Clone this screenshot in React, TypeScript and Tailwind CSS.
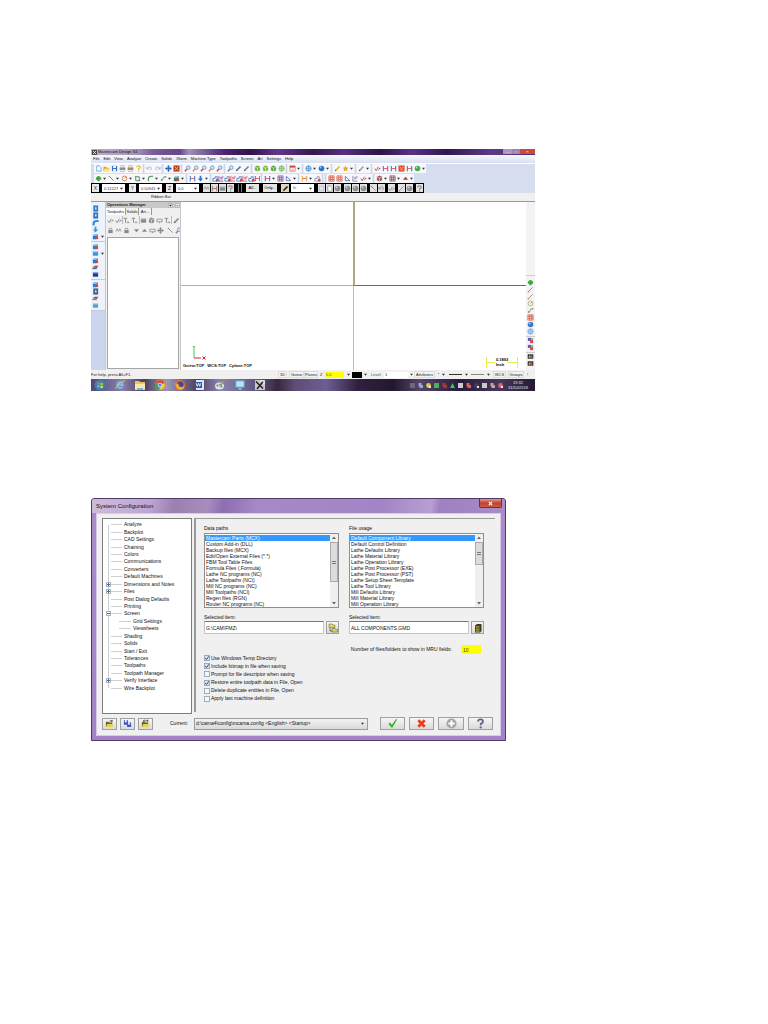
import React, { useState } from "react";

const shapes: Record<string, (c: string) => React.ReactNode> = {
  page: (c) => <path d="M2 1h3l2 2v4H2z" fill="#fff" stroke={c} strokeWidth=".9" />,
  folder: (c) => (<><path d="M.5 2h3l1 1H7v4H.5z" fill={c} /><path d="M2 4h6L6.5 7H.5z" fill="#ffe27a" /></>),
  disk: (c) => (<><path d="M1 1h6v6H1z" fill={c} /><path d="M2.3 1h3.4v2.3H2.3zM2.3 4.7h3.4V7H2.3z" fill="#e8f0ff" /></>),
  printer: (c) => (<><path d="M2 .8h4V3H2zM2 5h4v2.4H2z" fill="#fff" stroke={c} strokeWidth=".6" /><path d="M.7 3h6.6v2.6H.7z" fill={c} /></>),
  help: (c) => (<><path d="M2 2.6Q2 1 4 1t2 1.5Q6 3.700 4.200 4.200V5.400" fill="none" stroke={c} strokeWidth="1.400" /><circle cx="4.200" cy="6.900" r=".8" fill={c} /></>),
  undo: (c) => <path d="M1 2v2.500h2.500M1.200 4Q4 .5 6 3q1 2-1.500 3" fill="none" stroke={c} strokeWidth=".9" />,
  redo: (c) => <path d="M7 2v2.500H4.500M6.800 4Q4 .5 2 3q-1 2 1.500 3" fill="none" stroke={c} strokeWidth=".9" />,
  move: (c) => <path d="M4 0l1.600 2H4.800v1.200H6V2.400L8 4 6 5.600V4.800H4.800V6h.8L4 8 2.400 6h.8V4.800H2v.8L0 4l2-1.600v.8h1.200V2h-.8z" fill={c} />,
  fit: (c) => (<><path d="M.5.500h7v7h-7z" fill={c} /><path d="M2 2l4 4M6 2L2 6" stroke="#ffc04d" strokeWidth="1" /></>),
  mag: (c) => (<><path d="M3.400 4.600L1 7.200" stroke={c} strokeWidth="1.700" /><circle cx="4.900" cy="3" r="2.100" fill="#cfe5fa" stroke="#5c87bd" strokeWidth=".8" /></>),
  cube: (c) => (<><path d="M4 .6l3 1.500v3.800L4 7.500 1 5.900V2.100z" fill={c} /><path d="M1.300 2.300L4 3.600l2.700-1.300M4 3.600v3.600" stroke="#fff" strokeWidth=".6" fill="none" /></>),
  calendar: (c) => (<><path d="M1 1h6v6H1z" fill="#fff" stroke={c} strokeWidth=".7" /><path d="M1 1h6v2H1z" fill={c} /><path d="M2.500 4.500h3M2.500 5.700h3" stroke="#888" strokeWidth=".5" /></>),
  globe: (c) => (<><circle cx="4" cy="4" r="3" fill="#d8edfb" stroke={c} strokeWidth=".9" /><path d="M1 4h6M4 1v6M4 1q-3 3 0 6q3-3 0-6" stroke={c} strokeWidth=".5" fill="none" /></>),
  sphere: (c) => (<><circle cx="4" cy="4" r="3.200" fill={c} /><circle cx="3" cy="2.800" r="1" fill="#fff" opacity=".65" /></>),
  pencil: (c) => (<><path d="M1 7l.7-2L5.600 1 7 2.400 3 6.400z" fill={c} /><path d="M1 7l.7-2L3 6.400z" fill="#704515" /></>),
  star: (c) => <path d="M4 .5l1 2.300 2.600.2-2 1.700.6 2.600L4 6 1.800 7.300l.6-2.600L.4 3 3 2.800z" fill={c} />,
  plus: (c) => <path d="M2.700 1h2.600v1.700H7v2.600H5.300V7H2.700V5.300H1V2.700h1.700z" fill={c} />,
  line: (c) => (<><path d="M1.500 1.500l5 5" stroke={c} strokeWidth="1" /><circle cx="1.500" cy="1.500" r=".7" fill="#3b9c47" /></>),
  slash: (c) => (<><path d="M6.500 1.500l-5 5" stroke={c} strokeWidth="1" /><circle cx="1.500" cy="6.500" r=".8" fill="#d65" /></>),
  circle: (c) => (<><circle cx="4" cy="4" r="2.700" fill="none" stroke={c} strokeWidth="1" /><path d="M4 4l2-2" stroke="#d63" strokeWidth=".8" /></>),
  rect: (c) => (<><path d="M2 2h4v4.500H2z" fill="none" stroke={c} strokeWidth="1" /><path d="M1 2h1.200M5.500 6.500H7" stroke="#d33" strokeWidth="1" /></>),
  arc: (c) => <path d="M1.500 7V5q0-3.500 3.500-3.500h2" fill="none" stroke={c} strokeWidth="1.200" />,
  thickarc: (c) => <path d="M1.800 7.500V5.500q0-3.200 3.200-3.200h2.500" fill="none" stroke={c} strokeWidth="2.400" />,
  spline: (c) => (<><path d="M1 6q2 1 2.500-2T7 2.500" fill="none" stroke={c} strokeWidth="1" /><path d="M1 5.500h1.200M6 2h1.200" stroke="#d33" /></>),
  block: (c) => (<><path d="M1 1.500h6v5H1z" fill={c} /><path d="M1 1.500h6v1.300H1z" fill="#fff" opacity=".5" /></>),
  solid: (c) => (<><path d="M1 3l2-2h3.500v4.500L5 7H1z" fill={c} /><path d="M1 3l2-2h3.500L5 3z" fill="#8fd0f7" /><path d="M4 4h3v3H4z" fill="#d14b42" /></>),
  extrude: (c) => (<><path d="M1.500 .5h5.500v7H1.500z" fill={c} /><path d="M3.500 2.500h1.700v2.700H3.500z" fill="#d9f1ff" /></>),
  down: (c) => <path d="M3 .8h2V4h2L4 7.400 1 4h2z" fill={c} />,
  slab: (c) => (<><path d="M.5 4L3 2h4.500L5.500 4.500z" fill="#b64a3c" /><path d="M.5 4.500h5v1.400h-5z" fill={c} /></>),
  steps: (c) => (<><path d="M1 7V4h2.500V2H6v5z" fill="none" stroke={c} strokeWidth=".9" /><path d="M4.500 4.500h3v3h-3z" fill="#d94a45" /></>),
  stepsb: (c) => (<><path d="M1 1v6h5" fill="none" stroke={c} strokeWidth="1" /><path d="M2.500 2h3v3h-3z" fill={c} opacity=".65" /><path d="M5 1l2 2" stroke="#d44" strokeWidth=".8" /></>),
  grid: (c) => <path d="M1 1h6v6H1zM1 3h6M1 5h6M3 1v6M5 1v6" fill="none" stroke={c} strokeWidth=".8" />,
  tri: (c) => <path d="M1.500 1.500v5h5.300z" fill="none" stroke={c} strokeWidth="1" />,
  bars: (c) => (<><path d="M1.500 1v6M6.500 1v6" stroke={c} strokeWidth="1.200" /><path d="M2 4h4" stroke="#d44" strokeWidth=".9" /></>),
  check: (c) => (<><path d="M1 4l1.500 2.500L5 2" fill="none" stroke={c} strokeWidth="1" /><path d="M5 6l2-3M5.500 4h2" stroke={c} strokeWidth=".8" /></>),
  tee: (c) => (<><path d="M.8 1.500h4M2.800 1.500v5" stroke={c} strokeWidth="1.100" /><path d="M4 6.500h3M5 4.500l2 2" stroke={c} strokeWidth=".8" /></>),
  lock: (c) => (<><path d="M1.500 3.500h5V7h-5z" fill={c} /><path d="M2.500 3.500V1.500h3v2" fill="none" stroke={c} strokeWidth=".8" /></>),
  wave: (c) => <path d="M1 5l1.500-3L4 5l1.500-3L7 5" fill="none" stroke={c} strokeWidth=".9" />,
  tdown: (c) => <path d="M1 2.500h6L4 6z" fill={c} />,
  tup: (c) => <path d="M1 5.500h6L4 2z" fill={c} />,
  tag: (c) => <path d="M1 2.500h6v3H1zM4 5.500V7" fill="none" stroke={c} strokeWidth=".9" />,
  dashed: (c) => <path d="M1.500 1.500h5v5h-5z" fill="none" stroke={c} strokeWidth=".7" strokeDasharray="1 1" />,
  multi: () => (<><path d="M1 1h3.500v3.500H1z" fill="#6552c8" /><path d="M3.500 3.500H7V7H3.500z" fill="#d84a4a" /><path d="M4 1.500h3v1.500H4z" fill="#48a65b" /></>),
  palette: () => (<><path d="M.8 1.500h6.400v5H.8z" fill="#27252b" /><path d="M2 3h2v2.500H2z" fill="#f1b634" /><path d="M4 2.500h2v2H4z" fill="#3aa25a" /><path d="M4.500 4.500h2v1.500h-2z" fill="#d44" /></>),
};

function Glyph({ name, color }: { name: string; color: string }) {
  return (
    <svg viewBox="0 0 8 8" aria-hidden="true" className="size-[7px] shrink-0">
      {shapes[name]?.(color)}
    </svg>
  );
}

function Caret() {
  return (
    <svg viewBox="0 0 4 4" aria-hidden="true" className="size-[3px] shrink-0">
      <path d="M0 1h4L2 3.500z" fill="#333" />
    </svg>
  );
}

function Tools({ items, tight = false }: { items: string; tight?: boolean }) {
  return (
    <div className="flex h-[9px] shrink-0 items-center bg-[#f6f8fc]">
      {items.split(" ").map((it, i) => {
        if (it === "|") return <span key={i} className="flex h-[9px] w-[3px] justify-center bg-[#e6ebf6]"><span className="h-full w-px bg-[#cdd5e6]" /></span>;
        if (it === "v") return <button key={i} aria-label="More" className="flex w-[5px] items-center justify-center"><Caret /></button>;
        const [n, c] = it.split(":");
        return (
          <button key={i} aria-label={n} className={tight ? "flex w-[6px] items-center justify-center" : "flex w-[8px] items-center justify-center"}>
            <Glyph name={n} color={c} />
          </button>
        );
      })}
    </div>
  );
}

const menus = ["File", "Edit", "View", "Analyze", "Create", "Solids", "Xform", "Machine Type", "Toolpaths", "Screen", "Art", "Settings", "Help"];

function Coord({ axis, value }: { axis: string; value: string }) {
  return (
    <label className="flex h-[8px] items-center gap-[3px] text-[4px] text-[#333]">
      <span className="flex h-full w-[7px] items-center justify-center bg-[#ececec] text-[5px]">{axis}</span>
      <span className="flex h-full w-[23px] items-center bg-white pr-[2px]">
        <input defaultValue={value} className="h-full w-full min-w-0 bg-transparent pl-[2px] outline-none" />
        <Caret />
      </span>
    </label>
  );
}

function Chips({ items }: { items: string[] }) {
  return (
    <div className="flex h-[8px] gap-px">
      {items.map((n, i) => (
        <button key={i} aria-label={n} className="flex h-full w-[7px] items-center justify-center bg-[#e2e2e2]">
          <Glyph name={n} color="#8c8c8c" />
        </button>
      ))}
    </div>
  );
}

function SideStack({ items }: { items: string[] }) {
  return (
    <div className="flex flex-col border-b border-[#c3cbdc] py-px">
      {items.map((it, i) => {
        const [n, c, d] = it.split(":");
        return (
          <button key={i} aria-label={n} className="flex h-[7px] items-center gap-[2px] pl-px">
            <Glyph name={n} color={c} />
            {d && <Caret />}
          </button>
        );
      })}
    </div>
  );
}

function OperationsManager() {
  return (
    <section className="flex w-[76px] shrink-0 flex-col border-x border-[#c8c8c8] bg-[#f0f0f0]">
      <header className="flex h-[6px] items-center bg-[#c9c9c9] pl-px text-[4px] text-[#222]">
        <h2 className="grow font-bold">Operations Manager</h2>
        <button aria-label="Minimize" className="flex h-[5px] w-[5px] items-center justify-center border border-[#bbb] bg-[#ececec]"><Caret /></button>
        <button aria-label="Close" className="ml-[2px] h-[5px] w-[5px] border border-[#bbb] bg-[#ececec] text-[4px] leading-[3px]">×</button>
      </header>
      <div className="flex h-[7px] items-stretch text-[4px] text-[#222]">
        <button className="w-[20px] border-r border-[#999] bg-white">Toolpaths</button>
        <button className="w-[13px] border-r border-[#999]">Solids</button>
        <button className="w-[13px] border-r border-[#999]">Art...</button>
      </div>
      <div className="flex h-[10px] items-center overflow-hidden">
        {["check", "check", "|", "tee", "tee", "|", "block", "cube", "tag", "tee", "|", "pencil"].map((n, i) => n === "|" ? <span key={i} className="h-[8px] w-px bg-[#bbb]" /> : <button key={i} aria-label={n} className="flex w-[8px] shrink-0 justify-center"><Glyph name={n} color="#8a8a8a" /></button>)}
      </div>
      <div className="flex h-[10px] items-center overflow-hidden">
        {["lock", "wave", "lock", "|", "tdown", "tup", "tag", "move", "|", "line", "mag"].map((n, i) => n === "|" ? <span key={i} className="mx-px h-[8px] w-px bg-[#bbb]" /> : <button key={i} aria-label={n} className="flex w-[8px] shrink-0 justify-center"><Glyph name={n} color="#8a8a8a" /></button>)}
      </div>
      <div className="m-px mt-[2px] grow border border-[#a5a5a5] bg-white" />
    </section>
  );
}

function Viewport() {
  return (
    <div className="relative min-w-0 grow bg-white">
      <div className="flex h-full flex-col">
        <div className="flex h-[84px] shrink-0">
          <div className="w-[172px] border-b border-b-[#c9a79c]" />
          <div className="grow border-b border-l-2 border-b-[#8d6142] border-l-[#b3a67c]" />
        </div>
        <div className="flex grow">
          <div className="w-[173px] border-r border-r-[#d8b3ae]" />
          <div className="flex grow flex-col items-end justify-end pb-[2px] pr-[8px]">
            <div className="relative flex h-[11px] w-[32px] justify-center border-x border-[#ecec4a]">
              <span className="absolute left-0 top-[5px] h-px w-[8px] bg-[#ecec4a]" />
              <span className="absolute right-0 top-[5px] h-px w-[10px] bg-[#ecec4a]" />
              <p className="text-[4px] font-bold leading-[5px] text-black">0.1893<br />Inch</p>
            </div>
          </div>
        </div>
      </div>
      <svg viewBox="0 0 14 14" aria-hidden="true" className="absolute bottom-[10px] left-[11px] size-[14px]">
        <path d="M2 3v9" stroke="#45d045" strokeWidth="1" />
        <path d="M2 12h7" stroke="#d23" strokeWidth="1" />
        <path d="M1 0l1 1.500L3 0M2 1.500V3" stroke="#45d045" fill="none" />
        <path d="M10.500 10.500l3 3M13.500 10.500l-3 3" stroke="#e02030" />
      </svg>
      <p className="absolute bottom-[2px] left-[2px] flex gap-[3px] whitespace-nowrap text-[4px] font-bold text-[#111]">
        <span>Gview:TOP</span><span>WCS:TOP</span><span>Cplane:TOP</span>
      </p>
    </div>
  );
}

function StatusBar() {
  const cell = "flex h-[7px] items-center justify-center border border-[#dcdcdc] bg-[#f4f4f4]";
  return (
    <footer className="flex h-[9px] items-center bg-[#f0f0f0] text-[4px] text-[#222]">
      <span className="w-[187px] shrink-0">For help, press Alt+F1.</span>
      <button className={`${cell} w-[9px]`}>3D</button>
      <button className={`${cell} ml-[2px] w-[15px]`}>Gview</button>
      <button className={`${cell} w-[14px]`}>Planes</button>
      <label className="ml-[2px] flex items-center gap-[2px]"><span className="w-[3px]">Z</span>
        <input defaultValue="0.0" className="h-[6px] w-[19px] min-w-0 bg-[#ffff00] pl-px text-[#555]" /></label>
      <span className="flex w-[8px] justify-center"><Caret /></span>
      <button aria-label="Color" className="h-[6px] w-[10px] bg-black" />
      <span className="flex w-[7px] justify-center"><Caret /></span>
      <label className="ml-[2px] flex items-center gap-[2px]"><span className="w-[11px] text-[#456]">Level</span>
        <input defaultValue="1" className="h-[6px] w-[24px] min-w-0 bg-white pl-px" /></label>
      <span className="flex w-[6px] justify-center bg-white"><Caret /></span>
      <button className={`${cell} w-[21px]`}>Attributes</button>
      <span className="w-[7px] text-center">*</span>
      <Caret />
      <span className="ml-[4px] h-px w-[13px] bg-[#333]" />
      <span className="flex w-[9px] justify-center"><Caret /></span>
      <span className="h-px w-[13px] bg-[#888]" />
      <span className="flex w-[9px] justify-center"><Caret /></span>
      <button className={`${cell} w-[13px]`}>WCS</button>
      <button className={`${cell} ml-[2px] w-[16px]`}>Groups</button>
      <button className="ml-[3px]">!</button>
    </footer>
  );
}

const apps: { name: string; art: React.ReactNode }[] = [
  { name: "Start", art: <><circle cx="6" cy="6" r="5.500" fill="#3b83ae" /><path d="M3 3.500q1.400-1 2.700 0v2.200q-1.300-.9-2.700 0z" fill="#e76a3c" /><path d="M6.300 3.700q1.300.8 2.700 0v2.200q-1.400.8-2.700 0z" fill="#94c952" /><path d="M3 6.400q1.400-1 2.700 0v2.200q-1.300-.9-2.700 0z" fill="#5fb9ed" /><path d="M6.300 6.600q1.300.8 2.700 0v2.200q-1.400.8-2.700 0z" fill="#f5cb49" /></> },
  { name: "Internet Explorer", art: <><path d="M3.200 6h5.600Q8.500 3.200 6 3.200T3.200 6t2.800 3q1.800 0 2.600-1.400" fill="none" stroke="#6bc3ef" strokeWidth="1.800" /><path d="M1 9.800Q4 4 11 1.500" fill="none" stroke="#e8c563" strokeWidth=".8" /></> },
  { name: "Explorer", art: <><path d="M1 2h4l1 1h5v8H1z" fill="#e9c563" /><path d="M1 5h10v5.500H1z" fill="#fae9a6" /><path d="M3 9h6v2H3z" fill="#6fb3de" /></> },
  { name: "Chrome", art: <><circle cx="6" cy="6" r="5" fill="#f1c73a" /><path d="M6 6L1.700 3.500A5 5 0 0 1 10.600 4z" fill="#db4a3b" /><path d="M6 6l-.6 5A5 5 0 0 1 1.700 3.500z" fill="#3e9f55" /><circle cx="6" cy="6" r="2.300" fill="#fff" /><circle cx="6" cy="6" r="1.700" fill="#478cdd" /></> },
  { name: "Firefox", art: <><circle cx="6" cy="6" r="5" fill="#e96a22" /><circle cx="6.500" cy="5.500" r="3" fill="#3b4a9e" /><path d="M1.300 4Q3 5 5 5.500 4 8 8 8q2 0 2.700-2-.5 5-4.700 5T1.300 4" fill="#f6a62c" /></> },
  { name: "Word", art: <><path d="M2 1h8v10H2z" fill="#dce7f6" /><path d="M1 3h7v6H1z" fill="#2f5ca8" /><path d="M2.300 4.300l1 3 1.200-3 1.200 3 1-3" fill="none" stroke="#fff" strokeWidth=".8" /></> },
  { name: "Paint", art: <><ellipse cx="5.500" cy="7" rx="4.500" ry="3.500" fill="#d7e3ee" /><circle cx="3.500" cy="6.500" r="1" fill="#e14b41" /><circle cx="6" cy="5.500" r="1" fill="#3d9bd8" /><circle cx="7.500" cy="7.500" r="1" fill="#51a951" /><path d="M10.500 1L6 8" stroke="#c78a42" strokeWidth="1.200" /></> },
  { name: "Monitor", art: <><path d="M1.500 1.500h9v7h-9z" fill="#73bee8" /><path d="M2.500 2.500h7v5h-7z" fill="#b9e3fa" /><path d="M4.500 9h3v2h-3z" fill="#84b5d2" /></> },
  { name: "Mastercam", art: <><path d="M1 1h10v10H1z" fill="#c7c7c7" /><path d="M2 2.500l7 7M9.500 2L3 10" stroke="#222" strokeWidth="1.500" /><path d="M6 2h4v3" stroke="#fff" fill="none" /></> },
];

function Taskbar() {
  const tray = ["#6c6878", "#8eaccc", "#e0c84e", "#4fae58", "#b13434", "#3ac74b", "#c9c9d2", "#e85b5b", "#454055", "#c5ceca", "#c4a4a8", "#d96767"];
  return (
    <nav aria-label="Taskbar" className="flex h-[12px] items-center bg-[linear-gradient(90deg,#4b4977_0%,#8a7fa8_7%,#4a4061_12%,#a095b5_17%,#4b4060_24%,#8a84ad_29%,#5c5278_38%,#39273f_42%,#5f4d78_46%,#6d5e92_53%,#30213f_60%,#221730_68%,#56456a_74%,#281c3a_83%,#483759_92%,#231a35_100%)]">
      <div className="flex gap-[8px] pl-[3px]">
        {apps.map((a) => (
          <button key={a.name} aria-label={a.name} className="flex w-[12px] justify-center">
            <svg viewBox="0 0 12 12" aria-hidden="true" className="size-[12px]">{a.art}</svg>
          </button>
        ))}
      </div>
      <div className="ml-auto flex items-center gap-[3px] pr-[2px]">
        {tray.map((c, i) => (
          <svg key={i} viewBox="0 0 5 5" aria-hidden="true" className="size-[5px]">
            {i === 5 ? <path d="M2.500 0L5 5H0z" fill={c} /> : i % 3 === 0 ? <path d="M0 0h5v5H0z" fill={c} /> : i % 3 === 1 ? <path d="M.5 0h3v2h1.500v3H1.500V3.500H.5z" fill={c} /> : <><circle cx="2.500" cy="2.500" r="2.400" fill={c} /><path d="M3 3h2v2H3z" fill="#e8e8ee" /></>}
          </svg>
        ))}
      </div>
      <time className="w-[26px] text-center text-[4px] leading-[5px] text-[#e4e0ea]">19:32<br />31/10/2018</time>
      <span className="w-[4px]" />
    </nav>
  );
}

function DesignWindow() {
  return (
    <section className="w-full max-w-[444px] bg-[#d5ddee] font-['Liberation_Sans',sans-serif] leading-none">
      <header className="flex h-[6px] items-center bg-[linear-gradient(90deg,#b9b1c4_0%,#a596b8_10%,#7b5b9a_14%,#66458a_20%,#a091b8_22%,#4d2377_30%,#2e1447_36%,#64358f_42%,#35174f_50%,#563082_57%,#2c1347_65%,#593189_72%,#2f174e_80%,#5d3a88_90%,#523078_100%)]">
        <svg viewBox="0 0 6 6" aria-hidden="true" className="ml-px size-[5px]"><path d="M0 0h6v6H0z" fill="#444" /><path d="M1 1l4 4M5 1L1 5" stroke="#fff" /></svg>
        <h1 className="ml-px text-[4px] text-[#111]">Mastercam Design X4</h1>
        <div className="ml-auto flex h-[5px] self-start text-[4px] leading-[4px] text-white">
          <button aria-label="Minimize" className="w-[9px] bg-[#a99abd]">–</button>
          <button aria-label="Restore" className="w-[8px] bg-[#9a88b2]">▫</button>
          <button aria-label="Close" className="w-[15px] bg-[#cc4939]">×</button>
        </div>
      </header>
      <nav className="flex h-[8px] items-center gap-[4px] bg-[linear-gradient(180deg,#f7f8fc,#d8dfef)] pl-[2px] text-[4px] text-[#111]">
        {menus.map((m) => <button key={m} className="whitespace-nowrap">{m}</button>)}
      </nav>
      <div className="flex h-[10px] items-center border-t border-white pl-[3px]">
        <Tools items="page:#5b9bd8 folder:#d9a52e disk:#3a6fc0 printer:#8b8f98 printer:#a08b6b help:#e9b82c | undo:#a9adb8 redo:#a9adb8 | move:#2867b8 fit:#c3382a | mag:#d84a32 mag:#e28b35 mag:#d84a32 mag:#e28b35 mag:#d84a32 | mag:#5b7fb5 pencil:#4a79b8 pencil:#6a86b0 | cube:#6bb13c cube:#7cb93a cube:#56a344 globe:#6bb13c | calendar:#d1463c v | globe:#3a86c8 v sphere:#2f74c4 v | pencil:#e9b62e star:#e5a62b v | pencil:#a5a5a5 v | check:#d0483f bars:#7a5fb8 bars:#2d7cc9 fit:#d9532c bars:#3277c4 sphere:#48a853 v" />
      </div>
      <div className="flex h-[10px] items-center pl-[3px]">
        <Tools items="plus:#3fa53c v line:#4f8a55 v circle:#c8823e v rect:#3e8c57 v arc:#479152 v spline:#3e9a50 v solid:#38844a v | bars:#4a79c0 down:#2d74c9 v |" />
        <Tools tight items="steps:#356fc0 stepsb:#7c50b0 steps:#3f77c4 stepsb:#d0524b steps:#3476cb stepsb:#c05070 steps:#456fb9 bars:#7b62b8" />
        <Tools items="| bars:#3a72c5 v grid:#8d4ca5 tri:#5f72b5 v | bars:#e6aa3b v steps:#8a87a8 | | grid:#d64f3f grid:#d85a45 tri:#5774bd stepsb:#7a88b5 check:#a84e48 v | cube:#a25b5b v grid:#8b4b4e v tup:#a43d3c v" />
      </div>
      <div className="flex h-[10px]">
        <div className="flex items-center gap-[4px] bg-black pl-px">
          <Coord axis="X" value="0.11227" />
          <Coord axis="Y" value="0.50941" />
          <Coord axis="Z" value="0.0" />
          <Chips items={["wave", "bars", "block", "help"]} />
          <span className="h-[8px] w-[4px] border-x border-[#777]" />
          <button className="h-[8px] w-[13px] bg-[#e6e6e6] text-[4px]">All...</button>
          <button className="h-[8px] w-[14px] bg-[#e6e6e6] text-[4px]">Only...</button>
          <div className="flex items-center gap-[2px]">
            <button aria-label="Selection" className="flex size-[8px] items-center justify-center bg-[#ded8c0]"><Glyph name="pencil" color="#222" /></button>
            <span className="flex h-[8px] w-[23px] items-center bg-white pr-[2px]">
              <select aria-label="Selection mode" className="h-full w-full appearance-none bg-transparent pl-[2px] text-[4px] text-[#555]"><option>In</option></select>
              <Caret />
            </span>
          </div>
          <div className="flex gap-[3px] pr-px">
            <Chips items={["dashed", "page", "sphere"]} />
            <Chips items={["sphere", "sphere", "sphere"]} />
            <Chips items={["line", "undo"]} />
            <Chips items={["check"]} />
            <Chips items={["slash", "sphere"]} />
            <Chips items={["help"]} />
          </div>
        </div>
      </div>
      <div className="flex h-[8px] items-center bg-[#f0f0f0] pl-[60px] text-[4px] text-[#222]">Ribbon Bar</div>
      <div className="flex h-[169px] border-t border-[#999]">
        <aside className="w-[14px] shrink-0 bg-[#cbd6ee]">
          <div className="bg-[#eef2fa] pt-[2px]">
            <SideStack items={["extrude:#2b7fcf", "extrude:#3471bd", "thickarc:#2b8fdf", "down:#3b98e0", "solid:#2879c9:v"]} />
            <SideStack items={["solid:#377fc4", "block:#3794df:v", "solid:#2879c9", "slab:#3b70b0", "block:#173f94"]} />
            <SideStack items={["solid:#2b7fcf", "extrude:#375f93", "slab:#3794df", "block:#53a0d8"]} />
          </div>
        </aside>
        <OperationsManager />
        <Viewport />
        <aside className="flex w-[9px] shrink-0 flex-col bg-[#f3f3f5]">
          <div className="h-[74px] border-b border-[#c9cede]" />
          <div className="flex grow flex-col justify-between py-[3px]">
            {["plus:#3fa53c", "slash:#b56a6a", "slash:#86a05a", "circle:#a3b67c", "spline:#5f9a62", "grid:#d2503b", "sphere:#377bc7", "globe:#5fa2d4", "|", "multi:#000", "multi:#000", "|", "palette:#000", "palette:#000"].map((it, i) => {
              const [n, c] = it.split(":");
              return n === "|" ? <span key={i} className="h-px bg-[#ccc]" /> : <button key={i} aria-label={n} className="flex h-[6px] items-center justify-center"><Glyph name={n} color={c} /></button>;
            })}
          </div>
        </aside>
      </div>
      <StatusBar />
      <Taskbar />
    </section>
  );
}

const tree: { label: string; box?: "+" | "-"; child?: boolean }[] = [
  { label: "Analyze" }, { label: "Backplot" }, { label: "CAD Settings" }, { label: "Chaining" }, { label: "Colors" }, { label: "Communications" },
  { label: "Converters" }, { label: "Default Machines" }, { label: "Dimensions and Notes", box: "+" }, { label: "Files", box: "+" },
  { label: "Post Dialog Defaults" }, { label: "Printing" }, { label: "Screen", box: "-" }, { label: "Grid Settings", child: true },
  { label: "Viewsheets", child: true }, { label: "Shading" }, { label: "Solids" }, { label: "Start / Exit" }, { label: "Tolerances" },
  { label: "Toolpaths" }, { label: "Toolpath Manager" }, { label: "Verify Interface", box: "+" }, { label: "Wire Backplot" },
];

function TopicTree() {
  return (
    <div className="h-[196px] w-[90px] shrink-0 border border-[#7d7d7d] bg-white pt-[2px]">
      <ul className="relative grid h-[171px] auto-rows-fr before:absolute before:bottom-[4px] before:left-[5px] before:top-[4px] before:w-px before:bg-[#d0d0d0]">
        {tree.map((t) => (
          <li key={t.label} className="relative flex items-center pl-[3px]">
            {t.box ? (
              <button aria-label={`Toggle ${t.label}`} className="relative flex size-[5px] items-center justify-center border border-[#a9b3c6] bg-white">
                <span className="h-px w-[3px] bg-[#567]" />
                {t.box === "+" && <span className="absolute h-[3px] w-px bg-[#567]" />}
              </button>
            ) : <span className="w-[5px]" />}
            <span className={t.child ? "ml-[8px] h-px w-[12px] bg-[#d0d0d0]" : "h-px w-[11px] bg-[#d0d0d0]"} />
            <a href="#topic" className="ml-[2px] whitespace-nowrap">{t.label}</a>
          </li>
        ))}
      </ul>
    </div>
  );
}

function ListPanel({ title, items, selected, value, children, thumb }: { title: string; items: string[]; selected: string; value: string; children: React.ReactNode; thumb: string }) {
  return (
    <div className="w-[135px]">
      <h3 className="h-[10px] leading-[10px]">{title}</h3>
      <div className="flex h-[75px] border border-[#8e8e8e] bg-white">
        <ul role="listbox" aria-label={title} className="min-w-0 grow pt-px leading-[6px]">
          {items.map((it) => (
            <li key={it} role="option" aria-selected={it === selected} className={it === selected ? "h-[6px] whitespace-nowrap bg-[#3399ff] pl-px text-white" : "h-[6px] whitespace-nowrap pl-px"}>{it}</li>
          ))}
        </ul>
        <div className="flex w-[8px] shrink-0 flex-col items-center justify-between bg-[#efefef] py-[2px]">
          <svg viewBox="0 0 4 4" aria-hidden="true" className="size-[4px]"><path d="M0 3h4L2 .5z" fill="#666" /></svg>
          <div className="mt-[2px] grow self-stretch">
            <div className={`${thumb} flex flex-col items-center justify-center gap-px border border-[#aaa] bg-[#dcdcdc]`}>
              <span className="h-px w-[4px] bg-[#777]" /><span className="h-px w-[4px] bg-[#777]" />
            </div>
          </div>
          <svg viewBox="0 0 4 4" aria-hidden="true" className="size-[4px]"><path d="M0 1h4L2 3.500z" fill="#666" /></svg>
        </div>
      </div>
      <div className="mt-[5px]">
        <label className="block leading-[8px]">Selected item:
          <span className="flex items-center justify-between gap-[2px]">
            <input defaultValue={value} className="h-[13px] min-w-0 grow border border-[#c4c4c4] border-t-[#777] bg-white pl-px" />
            {children}
          </span>
        </label>
      </div>
    </div>
  );
}

const dataPaths = ["Mastercam Parts (MCX)", "Custom Add-in (DLL)", "Backup files (MCX)", "Edit/Open External Files (*.*)", "FBM Tool Table Files", "Formula Files (.Formula)", "Lathe NC programs (NC)", "Lathe Toolpaths (NCI)", "Mill NC programs (NC)", "Mill Toolpaths (NCI)", "Regen files (RGN)", "Router NC programs (NC)"];
const usage = ["Default Component Library", "Default Control Definition", "Lathe Defaults Library", "Lathe Material Library", "Lathe Operation Library", "Lathe Post Processor (EXE)", "Lathe Post Processor (PST)", "Lathe Setup Sheet Template", "Lathe Tool Library", "Mill Defaults Library", "Mill Material Library", "Mill Operation Library"];

const options = [
  { label: "Use Windows Temp Directory", on: true },
  { label: "Include bitmap in file when saving", on: true },
  { label: "Prompt for file descriptor when saving", on: false },
  { label: "Restore entire toolpath data in File, Open", on: true },
  { label: "Delete duplicate entities in File, Open", on: false },
  { label: "Apply last machine definition", on: false },
];

function Option({ label, on }: { label: string; on: boolean }) {
  const [v, setV] = useState(on);
  return (
    <label className="flex items-center gap-px">
      <span className="grid size-[6px] shrink-0">
        <input type="checkbox" checked={v} onChange={() => setV(!v)} className="col-start-1 row-start-1 size-[6px] appearance-none border border-[#a3abb6] bg-[#f4f8fc] checked:bg-[#cfe4f7]" />
        {v && <svg viewBox="0 0 6 6" aria-hidden="true" className="pointer-events-none col-start-1 row-start-1 size-[6px]"><path d="M1.300 3l1.200 1.500L4.800 1.300" fill="none" stroke="#274f9e" strokeWidth="1" /></svg>}
      </span>
      <span className="whitespace-nowrap">{label}</span>
    </label>
  );
}

const toolBtn = "flex shrink-0 items-center justify-center border border-[#a0a0a0] bg-[linear-gradient(180deg,#f6f6f6,#dadada)]";

function ConfigDialog() {
  return (
    <section aria-label="System Configuration" className="w-full max-w-[415px] rounded-t-[3px] border border-[#4f3a68] bg-[linear-gradient(180deg,#a98cc8,#a383c6)] px-[4px] pb-[4px] font-['Liberation_Sans',sans-serif] text-[5px] leading-none text-[#111]">
      <header className="-mx-[4px] flex h-[14px] items-center rounded-t-[2px] bg-[linear-gradient(100deg,#cdbcdc_0%,#bfa6d4_14%,#9a80ae_20%,#a78dbd_28%,#8e6db3_32%,#a789c6_40%,#a384c6_70%,#b79fd3_82%,#9f80c0_84%,#a98cc9_100%)] pl-[4px]">
        <h2 className="text-[6px]">System Configuration</h2>
        <button aria-label="Close" className="ml-auto mr-[3px] flex h-[9px] w-[23px] items-center justify-center self-start rounded-b-[2px] border border-t-0 border-[#70303a] bg-[linear-gradient(180deg,#e09a8c,#c2402f_50%,#cf5a3f)]">
          <svg viewBox="0 0 6 6" aria-hidden="true" className="size-[5px]"><path d="M1 1l4 4M5 1L1 5" stroke="#fff" strokeWidth="1.400" /></svg>
        </button>
      </header>
      <div className="border border-[#d9cbe8] bg-[#f0f0f0] px-[5px] pt-[4px]">
        <div className="flex gap-[2px]">
          <TopicTree />
          <div className="h-[194px] min-w-0 grow border-l-2 border-t border-[#999] pl-[8px] pt-[4px]">
            <div className="flex gap-[10px]">
              <ListPanel title="Data paths" items={dataPaths} selected={dataPaths[0]} value={"G:\\CAM\\FMZ\\"} thumb="h-[40px]">
                <button aria-label="Browse path" className={`${toolBtn} size-[13px]`}>
                  <svg viewBox="0 0 10 10" aria-hidden="true" className="size-[10px]"><path d="M1 1h3l1 1h2v2.500H1z" fill="#e5d957" stroke="#555" strokeWidth=".5" /><path d="M4 5.500h3l.5.800H9.500V9H4z" fill="#e5d957" stroke="#444" strokeWidth=".5" /><path d="M2 5v3h2" fill="none" stroke="#222" strokeWidth=".6" /></svg>
                </button>
              </ListPanel>
              <ListPanel title="File usage" items={usage} selected={usage[0]} value="ALL COMPONENTS.GMD" thumb="h-[23px]">
                <button aria-label="Browse library" className={`${toolBtn} size-[13px]`}>
                  <svg viewBox="0 0 10 10" aria-hidden="true" className="size-[10px]"><path d="M2 2.500L4 1h4.500v7L7 9.500H2z" fill="#3c3b22" /><path d="M2.700 3.300H6.500v1.300H2.700zM2.700 5.400H6.500v1.300H2.700zM2.700 7.500H6.500v1.200H2.700z" fill="#b7ad3e" /></svg>
                </button>
              </ListPanel>
            </div>
            <div className="flex justify-between pr-[14px] pt-[11px]">
              <div className="box-content grid h-[49px] auto-rows-fr pt-[9px]">
                {options.map((o) => <Option key={o.label} {...o} />)}
              </div>
              <label className="flex h-[9px] items-center gap-[9px]">
                <span className="whitespace-nowrap">Number of files/folders to show in MRU fields:</span>
                <input defaultValue="10" className="h-[9px] w-[20px] bg-[#ffff00] pl-[2px] text-[#444]" />
              </label>
            </div>
          </div>
        </div>
        <div className="flex items-center pb-[5px] pt-[3px]">
          <div className="flex gap-[3px]">
            {["Open", "Save", "Merge"].map((n) => (
              <button key={n} aria-label={n} className={`${toolBtn} h-[12px] w-[15px]`}>
                <svg viewBox="0 0 10 10" aria-hidden="true" className="size-[9px]">
                  {n === "Save" ? <><path d="M1 1.500h4.500v5H1zM4.500 4H9v5H4.500z" fill="#3f56c4" /><path d="M2.200 1.500h2v2h-2zM5.700 4h2v2h-2z" fill="#fff" /></> : <><path d="M1 3h2.500l1 1H8v5H1z" fill="#6b651d" /><path d="M2.500 5.500h7L8 9H1z" fill="#e3d64d" /><path d={n === "Open" ? "M5 2.500q1.500-2 3 0M8 1v2H6.500" : "M3 2h5M6.500.700L8 2 6.500 3.300M4 .7L2.500 2 4 3.300"} fill="none" stroke="#222" strokeWidth=".7" /></>}
                </svg>
              </button>
            ))}
          </div>
          <label className="ml-[17px] flex grow items-center">
            <span className="w-[24px] shrink-0">Current:</span>
            <span className="flex h-[12px] w-full max-w-[174px] items-center border border-[#9b9b9b] bg-[linear-gradient(180deg,#f2f2f2,#d9d9d9)] pr-[3px]">
              <select className="h-full w-full appearance-none bg-transparent pl-px"><option>{"d:\\cama4\\config\\mcama.config <English> <Startup>"}</option></select>
              <Caret />
            </span>
          </label>
          <div className="mr-[2px] flex gap-[4px]">
            <button aria-label="OK" className={`${toolBtn} h-[13px] w-[25px]`}><svg viewBox="0 0 12 12" aria-hidden="true" className="size-[11px]"><path d="M1.500 6.500L3.500 5l1.700 2.500L10 1l1 .5-5.500 9.500z" fill="#2fb22f" /></svg></button>
            <button aria-label="Cancel" className={`${toolBtn} h-[13px] w-[25px]`}><svg viewBox="0 0 12 12" aria-hidden="true" className="size-[11px]"><path d="M2.500 2.500l7 7M9.500 2.500l-7 7" stroke="#ee3a1c" strokeWidth="3" /></svg></button>
            <button aria-label="Add" className={`${toolBtn} h-[13px] w-[26px]`}><svg viewBox="0 0 12 12" aria-hidden="true" className="size-[11px]"><circle cx="6" cy="6" r="5.500" fill="#a4a4a4" /><path d="M6 2.500v7M2.500 6h7" stroke="#fff" strokeWidth="2" /></svg></button>
            <button aria-label="Help" className={`${toolBtn} h-[13px] w-[25px]`}><svg viewBox="0 0 12 12" aria-hidden="true" className="size-[11px]"><path d="M3.500 4Q3.300 1.500 6 1.500T8.700 4Q8.500 5.500 6.300 6.500V8" fill="none" stroke="#5d6580" strokeWidth="2" /><circle cx="6.200" cy="10.300" r="1.200" fill="#5d6580" /></svg></button>
          </div>
        </div>
      </div>
    </section>
  );
}

export default function App() {
  return (
    <main className="flex min-h-screen flex-col gap-[107px] bg-white px-[91px] pb-[107px] pt-[149px]">
      <DesignWindow />
      <ConfigDialog />
    </main>
  );
}
